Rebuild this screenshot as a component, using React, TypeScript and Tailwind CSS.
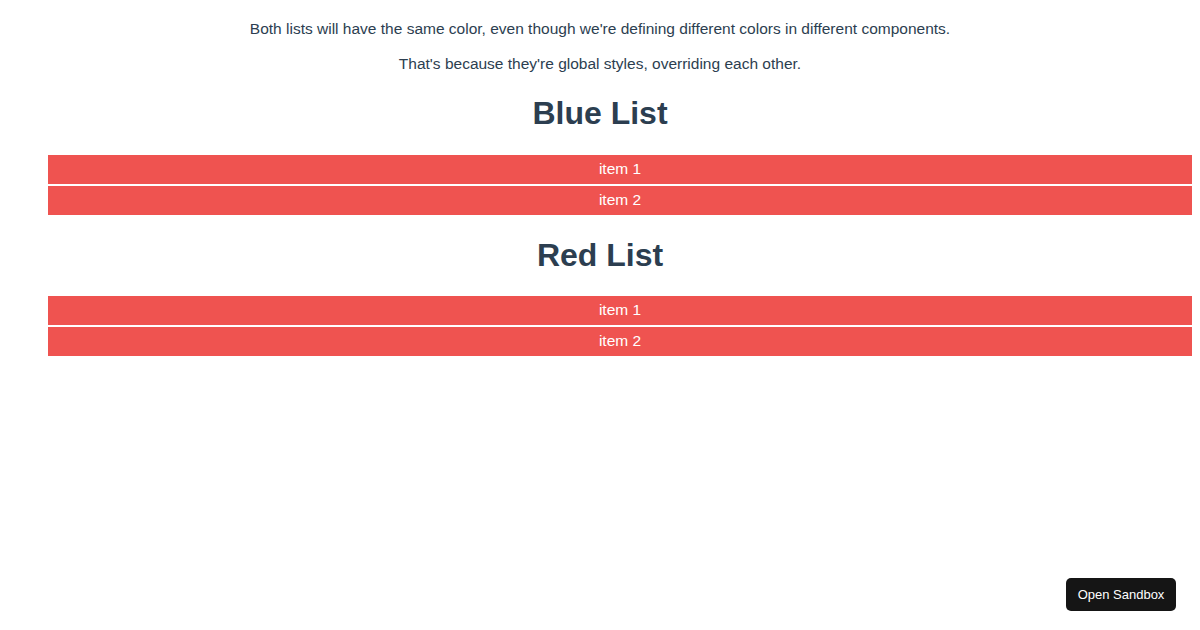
const items = ["item 1", "item 2"];

function List({ title, first }: { title: string; first?: boolean }) {
  return (
    <>
      <h1 className="mt-[22px] text-[32px] font-bold leading-[37px]">{title}</h1>
      <ul
        className={
          first
            ? "ml-[48px] mr-[8px] mt-[23px] flex flex-col gap-[2px]"
            : "ml-[48px] mr-[8px] mt-[22px] flex flex-col gap-[2px]"
        }
      >
        {items.map((item) => (
          <li
            key={item}
            className="h-[29px] bg-[#ef5350] text-[15.5px] leading-[27px] text-white"
          >
            {item}
          </li>
        ))}
      </ul>
    </>
  );
}

export default function App() {
  return (
    <div
      className="relative h-[630px] w-full bg-white pt-[20px] text-center text-[#2c3e50]"
      style={{ fontFamily: '"Liberation Sans", Arial, sans-serif' }}
    >
      <p className="text-[15.5px] leading-[18px]">
        Both lists will have the same color, even though we're defining different colors in different components.
      </p>
      <p className="mt-[17px] text-[15.5px] leading-[18px]">
        That's because they're global styles, overriding each other.
      </p>
      <List title="Blue List" first />
      <List title="Red List" />
      <button
        className="absolute bottom-[19px] right-[24px] flex h-[33px] w-[110px] items-center justify-center rounded-[5px] bg-[#151515] text-[13px] text-white"
        style={{ fontFamily: '"Liberation Sans", Arial, sans-serif' }}
      >
        Open Sandbox
      </button>
    </div>
  );
}
